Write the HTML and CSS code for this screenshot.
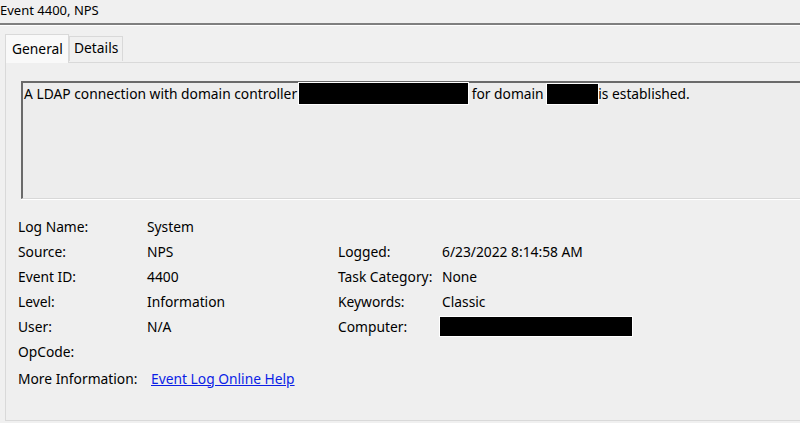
FILE: index.html
```html
<!DOCTYPE html>
<html>
<head>
<meta charset="utf-8">
<link rel="stylesheet" href="styles.css">
</head>
<body>
<div class="window">
  <div class="title">Event 4400, NPS</div>
  <div class="sep"></div>
  <div class="tabs">
    <div class="tab active">General</div>
    <div class="tab">Details</div>
  </div>
  <div class="panel">
    <div class="message">A LDAP connection with domain controller<span class="redact r1"></span> for domain <span class="redact r2"></span>is established.</div>
    <div class="props">
      <div class="lbl">Log Name:</div><div class="val">System</div><div></div><div></div>
      <div class="lbl">Source:</div><div class="val">NPS</div><div class="lbl">Logged:</div><div class="val">6/23/2022 8:14:58 AM</div>
      <div class="lbl">Event ID:</div><div class="val">4400</div><div class="lbl">Task Category:</div><div class="val">None</div>
      <div class="lbl">Level:</div><div class="val">Information</div><div class="lbl">Keywords:</div><div class="val">Classic</div>
      <div class="lbl">User:</div><div class="val">N/A</div><div class="lbl">Computer:</div><div class="val"><span class="redact r3"></span></div>
      <div class="lbl">OpCode:</div><div class="val"></div><div></div><div></div>
      <div class="lbl">More Information:</div><div class="val"><a class="link" href="#">Event Log Online Help</a></div><div></div><div></div>
    </div>
  </div>
</div>
</body>
</html>
```
FILE: styles.css
```css
html, body {
  margin: 0;
  padding: 0;
  background: #f0f0f0;
  width: 800px;
  height: 423px;
  overflow: hidden;
}
.window {
  font-family: "Noto Sans", "Open Sans", sans-serif;
  font-size: 13.8px;
  color: #000;
  display: flex;
  flex-direction: column;
  height: 423px;
}
.title {
  height: 23px;
  line-height: 20px;
  font-size: 13px;
  white-space: nowrap;
}
.sep {
  height: 2px;
  background: #7f7f7f;
  border-bottom: 1px solid #ffffff;
}
.tabs {
  display: flex;
  align-items: flex-end;
  margin-top: 8px;
  padding-left: 5px;
  height: 28px;
  position: relative;
  z-index: 1;
}
.tab {
  box-sizing: border-box;
  height: 25px;
  line-height: 22px;
  padding: 0 4px;
  border: 1px solid #d9d9d9;
  border-bottom: none;
  background: #f0f0f0;
  margin-bottom: 1px;
}
.tab.active {
  height: 29px;
  line-height: 28px;
  padding: 0 6px;
  background: #f9f9f9;
  margin-bottom: -1px;
  width: 64px;
}
.panel {
  flex: 1;
  margin-left: 5px;
  margin-right: -10px;
  margin-bottom: 2px;
  border: 1px solid #d9d9d9;
  background: #efefef;
  padding: 18px 0 0 15px;
  display: flex;
  flex-direction: column;
}
.message {
  box-sizing: border-box;
  height: 118px;
  border-top: 2px solid #6a6a6a;
  border-left: 2px solid #6a6a6a;
  border-bottom: 1px solid #d8d8d8;
  box-shadow: 0 1px 0 #ffffff;
  background: #ededed;
  padding: 0 0 0 1px;
  line-height: 19px;
  white-space: nowrap;
}
.redact {
  display: inline-block;
  background: #000;
  vertical-align: -5px;
  outline: 1px solid #fff;
}
.r1 { width: 169px; height: 21px; margin-left: 2px; }
.r2 { width: 51px; height: 20px; }
.r3 { width: 192px; height: 19px; vertical-align: -4px; margin-left: -2px; }
.props {
  display: grid;
  grid-template-columns: 129px 191px 104px 1fr;
  grid-template-rows: 25px 25px 25px 25px 25px 25px 28px;
  margin-top: 15px;
  margin-left: -3px;
  align-items: center;
  white-space: nowrap;
}
.link {
  color: #0b1ee6;
  text-decoration: underline;
  margin-left: 4px;
}
```
